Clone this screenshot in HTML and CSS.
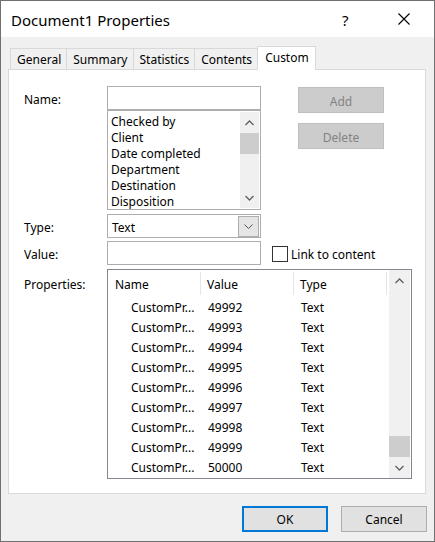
FILE: index.html
```html
<!DOCTYPE html>
<html lang="en">
<head>
    <meta charset="UTF-8">
    <title>Document1 Properties</title>
    <link rel="stylesheet" href="styles.css">
</head>
<body>

    <div class="dialog">
        <!-- title bar -->
        <div class="titlebar">
            <span class="title">Document1 Properties</span>
            <span class="help">?</span>
            <span class="close">
                <svg width="12" height="12" viewBox="0 0 12 12"><path d="M0.5 0.5 L11.5 11.5 M11.5 0.5 L0.5 11.5" stroke="#000" stroke-width="1.1" fill="none"/></svg>
            </span>
        </div>

        <div class="dialog-body">
            <div class="tabs">
                <div class="tab">General</div>
                <div class="tab">Summary</div>
                <div class="tab">Statistics</div>
                <div class="tab">Contents</div>
                <div class="tab active">Custom</div>
            </div>

            <div class="panel">
                <div class="top-row">
                    <div class="lbl">Name:</div>
                    <div class="name-col">
                        <input type="text" class="field">
                        <div class="listbox">
                            <div class="listbox-items">
                                <div>Checked by</div>
                                <div>Client</div>
                                <div>Date completed</div>
                                <div>Department</div>
                                <div>Destination</div>
                                <div>Disposition</div>
                            </div>
                            <div class="scrollbar">
                                <div class="sb-arrow">
                                    <svg width="9" height="6" viewBox="0 0 9 6"><path d="M0.5 5 L4.5 1 L8.5 5" stroke="#606060" stroke-width="1.3" fill="none"/></svg>
                                </div>
                                <div class="sb-track"><div class="sb-thumb"></div></div>
                                <div class="sb-arrow">
                                    <svg width="9" height="6" viewBox="0 0 9 6"><path d="M0.5 1 L4.5 5 L8.5 1" stroke="#606060" stroke-width="1.3" fill="none"/></svg>
                                </div>
                            </div>
                        </div>
                    </div>
                    <div class="btn-col">
                        <button class="btn" disabled>Add</button>
                        <button class="btn" disabled>Delete</button>
                    </div>
                </div>

                <div class="row type-row">
                    <div class="lbl">Type:</div>
                    <div class="combo">
                        <span class="combo-text">Text</span>
                        <span class="combo-drop">
                            <svg width="9" height="5" viewBox="0 0 9 5"><path d="M0.5 0.5 L4.5 4.5 L8.5 0.5" stroke="#555" stroke-width="1" fill="none"/></svg>
                        </span>
                    </div>
                </div>

                <div class="row value-row">
                    <div class="lbl">Value:</div>
                    <input type="text" class="field value-field">
                    <label class="check"><span class="check-box"></span>Link to content</label>
                </div>

                <div class="row props-row">
                    <div class="lbl props-lbl">Properties:</div>
                    <div class="listview">
                        <div class="lv-main">
                            <div class="lv-header">
                                <div class="lv-hcell">Name</div>
                                <div class="lv-hcell">Value</div>
                                <div class="lv-hcell">Type</div>
                            </div>
                            <div class="lv-row"><span class="c-name">CustomPr...</span><span class="c-val">49992</span><span class="c-type">Text</span></div>
                            <div class="lv-row"><span class="c-name">CustomPr...</span><span class="c-val">49993</span><span class="c-type">Text</span></div>
                            <div class="lv-row"><span class="c-name">CustomPr...</span><span class="c-val">49994</span><span class="c-type">Text</span></div>
                            <div class="lv-row"><span class="c-name">CustomPr...</span><span class="c-val">49995</span><span class="c-type">Text</span></div>
                            <div class="lv-row"><span class="c-name">CustomPr...</span><span class="c-val">49996</span><span class="c-type">Text</span></div>
                            <div class="lv-row"><span class="c-name">CustomPr...</span><span class="c-val">49997</span><span class="c-type">Text</span></div>
                            <div class="lv-row"><span class="c-name">CustomPr...</span><span class="c-val">49998</span><span class="c-type">Text</span></div>
                            <div class="lv-row"><span class="c-name">CustomPr...</span><span class="c-val">49999</span><span class="c-type">Text</span></div>
                            <div class="lv-row"><span class="c-name">CustomPr...</span><span class="c-val">50000</span><span class="c-type">Text</span></div>
                        </div>
                        <div class="scrollbar lv-scroll">
                            <div class="sb-arrow">
                                <svg width="9" height="6" viewBox="0 0 9 6"><path d="M0.5 5 L4.5 1 L8.5 5" stroke="#606060" stroke-width="1.3" fill="none"/></svg>
                            </div>
                            <div class="sb-track end"><div class="sb-thumb"></div></div>
                            <div class="sb-arrow">
                                <svg width="9" height="6" viewBox="0 0 9 6"><path d="M0.5 1 L4.5 5 L8.5 1" stroke="#606060" stroke-width="1.3" fill="none"/></svg>
                            </div>
                        </div>
                    </div>
                </div>
            </div>

            <div class="footer">
                <button class="btn2 ok">OK</button>
                <button class="btn2">Cancel</button>
            </div>
        </div>
    </div>

</body>
</html>
```

FILE: styles.css
```css
* { box-sizing: border-box; }
html, body { margin: 0; padding: 0; background: #fff; }
body { font-family: "Noto Sans", "Open Sans", sans-serif; font-size: 12px; color: #000; }

.dialog { width: 435px; height: 542px; border: 1px solid #707070; display: flex; flex-direction: column; }

/* title bar */
.titlebar { height: 36px; flex: 0 0 36px; background: #fff; display: flex; align-items: center; padding-left: 10px; }
.title { font-size: 15px; flex: 1 1 auto; padding-top: 1px; }
.help { font-size: 15px; width: 14px; margin-right: 42px; padding-top: 1px; }
.close { width: 12px; height: 12px; margin-right: 24px; display: flex; }

.dialog-body { flex: 1 1 auto; background: #f0f0f0; padding: 9px 8px 0 7px; }

/* tabs */
.tabs { display: flex; align-items: flex-end; height: 23px; padding-left: 2px; }
.tab { height: 21px; line-height: 19px; padding: 1px 5px 0 6px; border: 1px solid #d9d9d9; border-bottom: none; margin-left: -1px; background: #f0f0f0; white-space: nowrap; }
.tab:first-child { margin-left: 0; }
.tab.active { height: 24px; background: #fff; margin-bottom: -1px; position: relative; z-index: 1; padding: 1px 6px 0 7px; }

.panel { height: 425px; background: #fff; border: 1px solid #d9d9d9; padding: 16px 13px 0 15px; }

.lbl { width: 83px; flex: 0 0 83px; height: 24px; line-height: 20px; padding-top: 4px; }

.field { display: block; width: 154px; height: 24px; border: 1px solid #adadad; background: #fff; margin: 0; padding: 0 4px; font: inherit; outline: none; }

.top-row { display: flex; }
.top-row .lbl { padding-top: 3px; line-height: 21px; }
.name-col { width: 154px; flex: 0 0 154px; }

.listbox { height: 100px; border: 1px solid #adadad; display: flex; padding: 1px 1px 0 0; }
.listbox-items { flex: 1 1 auto; padding: 2px 0 0 3px; line-height: 16px; overflow: hidden; }

.scrollbar { width: 19px; flex: 0 0 19px; background: #f0f0f0; display: flex; flex-direction: column; }
.sb-arrow { height: 21px; flex: 0 0 21px; display: flex; align-items: center; justify-content: center; }
.sb-track { flex: 1 1 auto; display: flex; flex-direction: column; }
.sb-track.end { justify-content: flex-end; }
.sb-thumb { height: 21px; background: #cdcdcd; }
.listbox .scrollbar { margin-bottom: 1px; }

.btn-col { margin-left: 37px; padding-top: 1px; display: flex; flex-direction: column; gap: 10px; }
.btn { width: 86px; height: 26px; border: 1px solid #bfbfbf; background: #cccccc; color: #838383; font: inherit; padding: 2px 0 0; }

.row { display: flex; align-items: flex-start; }
.type-row { margin-top: 4px; }
.value-row { margin-top: 3px; }
.props-row { margin-top: 4px; }

.combo { width: 154px; height: 24px; border: 1px solid #adadad; display: flex; align-items: center; padding: 1px 1px 1px 4px; }
.combo-text { flex: 1 1 auto; padding-top: 2px; }
.combo-drop { width: 21px; height: 21px; background: #e5e5e5; border: 1px solid #adadad; display: flex; align-items: center; justify-content: center; }

.check { display: flex; align-items: center; margin-left: 11px; height: 24px; padding-top: 2px; }
.check-box { width: 16px; height: 16px; border: 1px solid #333; background: #fff; margin-right: 3px; margin-top: -1px; }

.props-lbl { height: auto; line-height: 28px; padding-top: 2px; }
.listview { width: 305px; height: 210px; border: 1px solid #828790; display: flex; }
.lv-main { flex: 1 1 auto; }
.lv-header { display: flex; height: 26px; padding: 2px 0 1px 0; }
.lv-hcell { width: 93px; border-right: 1px solid #e5e5e5; padding: 3px 0 0 6px; line-height: 20px; }
.lv-hcell:first-child { padding-left: 7px; }
.lv-row { display: flex; height: 20px; line-height: 16px; padding-top: 4px; }
.c-name { width: 94px; padding-left: 23px; }
.c-val { width: 93px; padding-left: 6px; }
.c-type { width: 93px; padding-left: 6px; }
.lv-scroll { width: 21px; flex: 0 0 21px; margin-right: 1px; }

/* dialog buttons */
.footer { display: flex; justify-content: flex-end; gap: 13px; margin-top: 12px; margin-right: -1px; }
.btn2 { width: 86px; height: 26px; border: 1px solid #adadad; background: #e1e1e1; font: inherit; color: #000; padding: 0; }
.btn2.ok { border: 2px solid #0078d7; }
```
